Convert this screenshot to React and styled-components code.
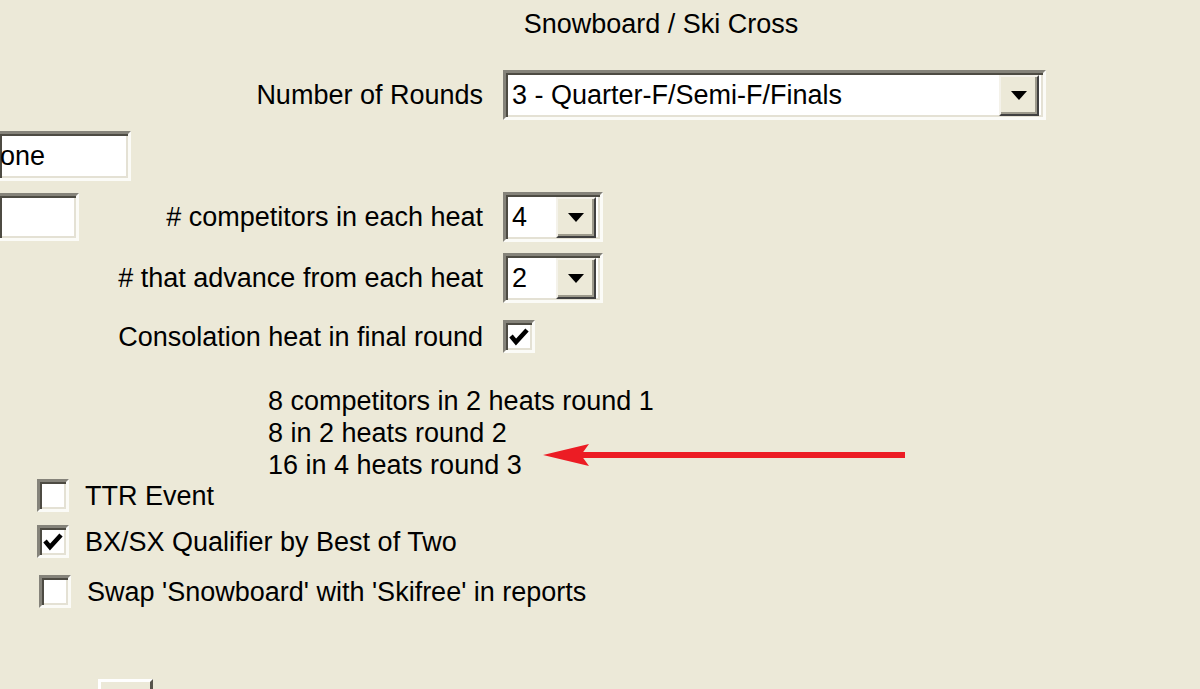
import React from "react";
import styled, { createGlobalStyle } from "styled-components";

const Global = createGlobalStyle`
  html, body {
    margin: 0;
    padding: 0;
    background: #ece9d8;
    overflow: hidden;
  }
`;

export default function App() {
  return (
    <>
      <Global />
      <Page>
        <Title>Snowboard / Ski Cross</Title>
        <Form>
          <Label>Number of Rounds</Label>
          <Select width={543}>
            <SelectText>3 - Quarter-F/Semi-F/Finals</SelectText>
            <DropButton size={40} />
          </Select>

          <Cell>
            <EditBox width={131}>one</EditBox>
          </Cell>
          <div />

          <Cell>
            <EditBox width={79} short />
            <Label>{"# competitors in each heat"}</Label>
          </Cell>
          <Select width={100}>
            <SelectText>4</SelectText>
            <DropButton size={40} />
          </Select>

          <Cell>
            <Label>{"# that advance from each heat"}</Label>
          </Cell>
          <Select width={100}>
            <SelectText>2</SelectText>
            <DropButton size={40} />
          </Select>

          <Cell last>
            <Label>Consolation heat in final round</Label>
          </Cell>
          <CheckCell last>
            <CheckBox checked />
          </CheckCell>
        </Form>

        <Summary>
          <Line>8 competitors in 2 heats round 1</Line>
          <Line>8 in 2 heats round 2</Line>
          <Line>16 in 4 heats round 3</Line>
          <Arrow />
        </Summary>

        <Options>
          <Option>
            <CheckBox />
            <OptionLabel>TTR Event</OptionLabel>
          </Option>
          <Option>
            <CheckBox checked />
            <OptionLabel>BX/SX Qualifier by Best of Two</OptionLabel>
          </Option>
          <Option shift>
            <CheckBox />
            <OptionLabel>Swap 'Snowboard' with 'Skifree' in reports</OptionLabel>
          </Option>
        </Options>

        <Footer>
          <ToolButton>
            <DiskIcon />
          </ToolButton>
        </Footer>
      </Page>
    </>
  );
}

function DropButton({ size }) {
  return (
    <DropFace size={size}>
      <svg width="16" height="9" viewBox="0 0 16 9">
        <polygon points="0,0 16,0 8,9" fill="#000" />
      </svg>
    </DropFace>
  );
}

function CheckBox({ checked }) {
  return (
    <Box>
      {checked && (
        <svg width="22" height="20" viewBox="0 0 22 20">
          <polyline
            points="3,9 8,15 19,3"
            fill="none"
            stroke="#000"
            strokeWidth="4.5"
          />
        </svg>
      )}
    </Box>
  );
}

function Arrow() {
  return (
    <ArrowSvg width="364" height="26" viewBox="0 0 364 26">
      <polygon points="0,13 46,2 38,13 46,24" fill="#ec1c24" />
      <rect x="36" y="10" width="326" height="6" fill="#ec1c24" />
    </ArrowSvg>
  );
}

function DiskIcon() {
  return (
    <svg width="22" height="14" viewBox="0 0 22 14">
      <rect x="2" y="3" width="18" height="11" rx="2" fill="#5b8bd6" />
      <rect x="6" y="0" width="10" height="6" fill="#a9c6ee" />
    </svg>
  );
}

const Page = styled.div`
  width: 1200px;
  height: 689px;
  overflow: hidden;
  background: #ece9d8;
  color: #000;
  font-family: "Liberation Sans", Arial, sans-serif;
  font-size: 27px;
  display: flex;
  flex-direction: column;
`;

const Title = styled.div`
  padding: 8px 0 0 122px;
  height: 32px;
  line-height: 32px;
  text-align: center;
`;

const Form = styled.div`
  margin-top: 30px;
  display: grid;
  grid-template-columns: 483px auto;
  column-gap: 20px;
  row-gap: 11px;
  justify-content: start;
  align-items: center;
`;

const Cell = styled.div`
  display: flex;
  justify-content: space-between;
  align-items: center;
  height: ${(p) => (p.last ? "33px" : "50px")};
  margin-top: ${(p) => (p.last ? "6px" : "0")};
`;

const CheckCell = styled.div`
  display: flex;
  align-items: center;
  margin-top: ${(p) => (p.last ? "6px" : "0")};
`;

const Label = styled.div`
  margin-left: auto;
  white-space: nowrap;
  line-height: 32px;
`;

const Sunken = styled.div`
  box-sizing: border-box;
  background: #fff;
  border-style: solid;
  border-width: 3px;
  border-color: #85837a #fbfbf7 #fbfbf7 #85837a;
  box-shadow: inset 2px 2px 0 #4d4b43, inset -2px -2px 0 #e4e1d4;
`;

const Select = styled(Sunken)`
  width: ${(p) => p.width}px;
  height: 50px;
  display: flex;
  align-items: center;
  justify-content: space-between;
  padding: 2px 4px 2px 6px;
`;

const SelectText = styled.span`
  white-space: nowrap;
  line-height: 32px;
`;

const DropFace = styled.div`
  box-sizing: border-box;
  width: ${(p) => p.size}px;
  height: 41px;
  background: #ece9d8;
  border-style: solid;
  border-width: 2px;
  border-color: #f4f2ea #404040 #404040 #f4f2ea;
  box-shadow: inset -2px -2px 0 #9d9a8c;
  display: flex;
  align-items: center;
  justify-content: center;
`;

const EditBox = styled(Sunken)`
  width: ${(p) => p.width}px;
  height: ${(p) => (p.short ? "48px" : "50px")};
  border-left: none;
  line-height: 44px;
  padding-left: 0;
  white-space: nowrap;
`;

const Box = styled(Sunken)`
  width: 32px;
  height: 33px;
  flex: none;
  display: flex;
  align-items: center;
  justify-content: center;
`;

const Summary = styled.div`
  position: relative;
  margin-top: 32px;
  padding-left: 268px;
`;

const Line = styled.div`
  line-height: 32px;
  white-space: nowrap;
`;

const ArrowSvg = styled.svg`
  position: absolute;
  left: 543px;
  top: 57px;
`;

const Options = styled.div`
  margin-top: -2px;
  padding-left: 37px;
  display: flex;
  flex-direction: column;
  gap: 13px;
`;

const Option = styled.div`
  display: flex;
  align-items: center;
  gap: 16px;
  margin-left: ${(p) => (p.shift ? "2px" : "0")};
  margin-top: ${(p) => (p.shift ? "4px" : "0")};
`;

const OptionLabel = styled.span`
  line-height: 32px;
  white-space: nowrap;
`;

const Footer = styled.div`
  margin-top: 71px;
  padding-left: 98px;
`;

const ToolButton = styled.div`
  box-sizing: border-box;
  width: 55px;
  height: 40px;
  background: #ece9d8;
  border-style: solid;
  border-width: 3px;
  border-color: #ffffff #55534a #55534a #ffffff;
  padding: 3px 0 0 6px;
`;
